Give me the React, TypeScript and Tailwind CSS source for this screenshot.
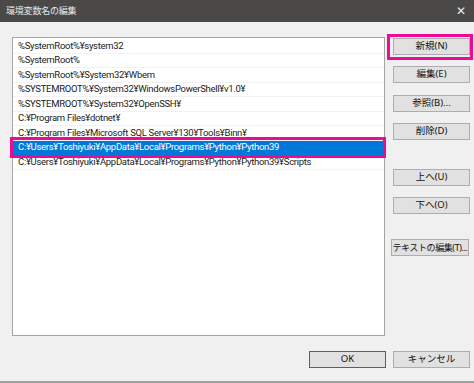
import React from "react";

const rows = [
  "%SystemRoot%¥system32",
  "%SystemRoot%",
  "%SystemRoot%¥System32¥Wbem",
  "%SYSTEMROOT%¥System32¥WindowsPowerShell¥v1.0¥",
  "%SYSTEMROOT%¥System32¥OpenSSH¥",
  "C:¥Program Files¥dotnet¥",
  "C:¥Program Files¥Microsoft SQL Server¥130¥Tools¥Binn¥",
  "C:¥Users¥Toshiyuki¥AppData¥Local¥Programs¥Python¥Python39",
  "C:¥Users¥Toshiyuki¥AppData¥Local¥Programs¥Python¥Python39¥Scripts",
];

const font = { fontFamily: '"Noto Sans", "Noto Sans CJK JP", sans-serif' };
const listFont = { fontFamily: 'Roboto, "Noto Sans CJK JP", sans-serif' };

function Btn({ children, className = "" }: { children: React.ReactNode; className?: string }) {
  return (
    <div
      className={
        "h-[17px] w-[77px] flex items-center justify-center whitespace-nowrap bg-[#e1e1e1] border border-[#adadad] text-[9.5px] text-[#111] " +
        className
      }
    >
      {children}
    </div>
  );
}

export default function App() {
  return (
    <div
      className="w-[474px] h-[383px] bg-[#f0f0f0] flex flex-col border-b-2 border-[#a0a0a0] overflow-hidden"
      style={font}
    >
      <div className="h-[22px] bg-[#4a4947] flex items-center justify-between pl-[6px] pr-[8px]">
        <span className="text-[9px] text-[#e8e8e8] tracking-[-0.2px]">環境変数名の編集</span>
        <span className="text-[12px] text-[#e8e8e8] leading-none">✕</span>
      </div>
      <div className="flex pl-[12px] pt-[15px]">
        <div
          className="w-[373px] h-[299px] bg-white border border-[#a5a5a5] flex flex-col pt-[1px]"
          style={listFont}
        >
          {rows.map((r, i) => (
            <div
              key={i}
              className={
                "relative h-[14.5px] flex items-center pl-[5px] text-[9.5px] tracking-[-0.3px] whitespace-nowrap border-b " +
                (i === 7
                  ? "bg-[#0078d7] text-white border-[#0078d7]"
                  : "text-[#222] border-[#f2f2f2]")
              }
            >
              {r}
              {i === 7 && (
                <div className="absolute top-[-4px] bottom-[-4px] left-[-3px] right-[-2px] border-[3px] border-[#ec0b96]" />
              )}
            </div>
          ))}
        </div>
        <div className="flex flex-col ml-[8px] pt-[1px]">
          <div className="relative">
            <Btn>新規(N)</Btn>
            <div className="absolute top-[-4px] bottom-[-5px] left-[-6px] right-[-3px] border-[3px] border-[#ec0b96]" />
          </div>
          <Btn className="mt-[11px]">編集(E)</Btn>
          <Btn className="mt-[12px]">参照(B)...</Btn>
          <Btn className="mt-[11px]">削除(D)</Btn>
          <Btn className="mt-[29px]">上へ(U)</Btn>
          <Btn className="mt-[11px]">下へ(O)</Btn>
          <Btn className="mt-[25px] -ml-[2px] w-[78px] tracking-[-0.4px] text-[9px]">テキストの編集(T)...</Btn>
        </div>
      </div>
      <div className="flex justify-end pr-[4px] pt-[15px] gap-[7px]">
        <div className="h-[17px] w-[77px] flex items-center justify-center bg-[#e1e1e1] border border-[#0078d7] text-[9.5px] text-[#111]">
          OK
        </div>
        <Btn>キャンセル</Btn>
      </div>
    </div>
  );
}
